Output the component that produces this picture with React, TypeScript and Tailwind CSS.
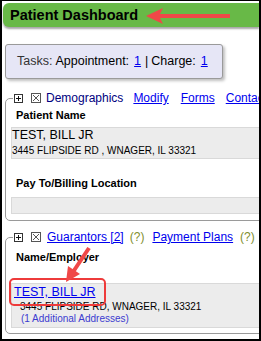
import React from 'react';

function PlusBox() {
  return (
    <svg width="9" height="9" viewBox="0 0 9 9" className="shrink-0">
      <rect x="0.5" y="0.5" width="8" height="8" fill="white" stroke="#333" />
      <path d="M2 4.5h5M4.5 2v5" stroke="#111" strokeWidth="1" />
    </svg>
  );
}

function XBox() {
  return (
    <svg width="10" height="10" viewBox="0 0 10 10" className="shrink-0">
      <rect x="0.5" y="0.5" width="9" height="9" fill="white" stroke="#555" />
      <path d="M2 2l6 6M8 2l-6 6" stroke="#444" strokeWidth="0.9" />
    </svg>
  );
}

function Help() {
  return <span className="text-[#7f8f2f]">(?)</span>;
}

function Link({ children, className = '' }: { children: React.ReactNode; className?: string }) {
  return <a className={`text-[#0000ee] underline ${className}`}>{children}</a>;
}

export default function App() {
  return (
    <div className="relative h-[341px] w-[261px] overflow-hidden border-2 border-t border-black bg-white font-['Liberation_Sans',Arial,sans-serif] text-black">
      {/* header */}
      <div className="ml-px mt-[2px] flex h-[24px] items-center rounded-l-[6px] bg-[#68b947] pl-[7px] shadow-[0_2px_2px_rgba(0,0,0,0.35)]">
        <span className="text-[14.5px] font-bold leading-none">Patient Dashboard</span>
      </div>

      {/* tasks */}
      <div className="ml-[3px] mt-[17px] flex h-[35px] w-[218px] items-center rounded-[3px] border border-[#9a9a9a] bg-[#e6e6f6] pl-[11px] text-[12.5px] shadow-[2px_2px_3px_rgba(0,0,0,0.25)]">
        <span className="text-[#333]">Tasks:</span>
        <span className="ml-[3px]">Appointment:</span>
        <Link className="ml-[5px]">1</Link>
        <span className="ml-[4px]">|</span>
        <span className="ml-[3px]">Charge:</span>
        <Link className="ml-[5px]">1</Link>
      </div>

      {/* demographics */}
      <fieldset className="ml-[3px] mt-[12px] w-[330px] rounded-[5px] border border-[#9a9a9a] px-[5px] pb-[6px]">
        <legend className="ml-[2px] flex h-[14px] items-center px-[1px] text-[12px] leading-[14px]">
          <PlusBox />
          <span className="ml-[8px]"><XBox /></span>
          <span className="ml-[5px] text-[#000080]">Demographics</span>
          <Link className="ml-[10px]">Modify</Link>
          <Link className="ml-[12px]">Forms</Link>
          <Link className="ml-[11px]">Contact</Link>
        </legend>
        <div className="mt-[4px] pl-[5px] text-[11px] font-bold leading-[13px]">Patient Name</div>
        <div className="mt-[5px] h-[32px] border border-[#d9d9d9] bg-[#ececec]">
          <div className="text-[12.5px] leading-[15px]">TEST, BILL JR</div>
          <div className="mt-[2px] text-[10px] leading-[12px]">3445 FLIPSIDE RD , WNAGER, IL 33321</div>
        </div>
        <div className="mt-[18px] pl-[5px] text-[11px] font-bold leading-[13px]">Pay To/Billing Location</div>
        <div className="mt-[7px] h-[17px] border border-[#d9d9d9] bg-[#ececec]" />
      </fieldset>

      {/* guarantors */}
      <fieldset className="ml-[3px] mt-[9px] w-[330px] rounded-[5px] border border-[#9a9a9a] px-[5px] pb-[5px]">
        <legend className="ml-[2px] flex h-[14px] items-center px-[1px] text-[12px] leading-[14px]">
          <PlusBox />
          <span className="ml-[8px]"><XBox /></span>
          <Link className="ml-[6px]">Guarantors [2]</Link>
          <span className="ml-[6px]"><Help /></span>
          <Link className="ml-[8px]">Payment Plans</Link>
          <span className="ml-[7px]"><Help /></span>
          <Link className="ml-[7px]">Statements</Link>
        </legend>
        <div className="mt-[7px] pl-[5px] text-[11px] font-bold leading-[13px]">Name/Employer</div>
        <div className="relative mt-[19px] h-[45px] border border-[#d9d9d9] bg-[#ececec] pl-[2px] pt-px">
          <Link className="block text-[12.5px] leading-[15px]">TEST, BILL JR</Link>
          <div className="mt-px pl-[6px] text-[10px] leading-[12px]">3445 FLIPSIDE RD, WNAGER, IL 33321</div>
          <div className="pl-[7px] text-[10px] leading-[12px] text-[#3b3bd0]">(1 Additional Addresses)</div>
          <div className="absolute left-[-3px] top-[-6px] h-[28px] w-[97px] rounded-[5px] border-[2.5px] border-[#ee3b3b]" />
        </div>
      </fieldset>

      {/* annotation arrows */}
      <svg className="absolute left-[144px] top-[6px]" width="86" height="18" viewBox="0 0 86 18">
        <path d="M13 9H84" stroke="#f04848" strokeWidth="4" />
        <polygon points="0,9 17,1 13,9 17,17" fill="#f04848" />
      </svg>
      <svg className="absolute left-[55px] top-[244px]" width="40" height="40" viewBox="0 0 40 40">
        <path d="M32 3L16 27" stroke="#f04848" strokeWidth="4" />
        <polygon points="9,37 23,29 11,21" fill="#f04848" />
      </svg>
    </div>
  );
}
